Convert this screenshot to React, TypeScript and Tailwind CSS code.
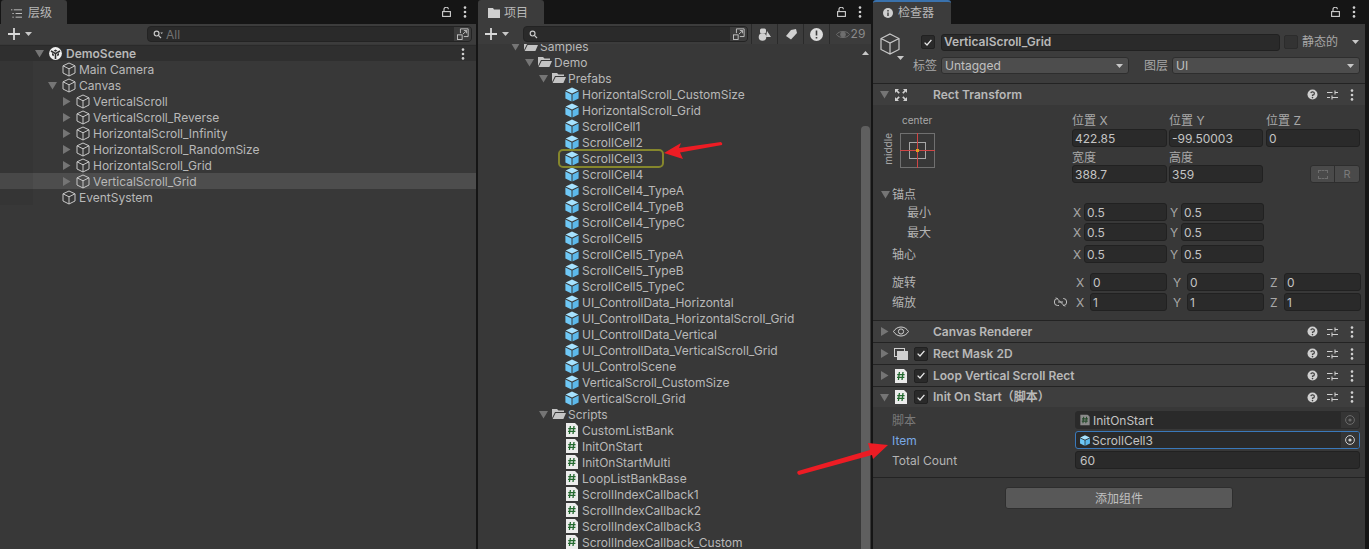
import type { ReactNode } from "react";

const font = "font-['Inter','Noto_Sans_CJK_SC',sans-serif]";

function Cube({ className = "" }: { className?: string }) {
  return (
    <svg viewBox="0 0 14 15" className={`h-[15px] w-[14px] shrink-0 ${className}`} fill="none" stroke="#c8c8c8" strokeWidth="1">
      <path d="M7 1 L13 3.8 V11 L7 14 L1 11 V3.8 Z" />
      <path d="M1 3.8 L7 6.8 L13 3.8 M7 6.8 V14" />
    </svg>
  );
}

function Prefab({ className = "" }: { className?: string }) {
  return (
    <svg viewBox="0 0 14 15" className={`h-[15px] w-[14px] shrink-0 ${className}`}>
      <path d="M7 .6 L13.4 3.6 L7 6.6 L.6 3.6 Z" fill="#a6e2ff" />
      <path d="M.4 4.6 L6.5 7.6 V14.6 L.4 11.5 Z" fill="#6fc8f6" />
      <path d="M13.6 4.6 L7.5 7.6 V14.6 L13.6 11.5 Z" fill="#5cb8ea" />
    </svg>
  );
}

function Script({ className = "" }: { className?: string }) {
  return (
    <svg viewBox="0 0 12 14" className={`h-[14px] w-[12px] shrink-0 ${className}`}>
      <path d="M0 0 H9 L12 3 V14 H0 Z" fill="#ececec" />
      <path d="M4.4 3 L3.4 11 M8 3 L7 11 M2.2 5.6 H9.6 M2 8.4 H9.4" stroke="#23692f" strokeWidth="1.3" fill="none" />
    </svg>
  );
}

function Folder() {
  return (
    <svg viewBox="0 0 14 12" className="h-[12px] w-[14px] shrink-0" fill="#c4c4c4">
      <path d="M0 1 H5 L6.5 2.5 H12 V4 H3 L0 10 Z" />
      <path d="M3.6 5 H14 L11.4 11 H.6 Z" />
    </svg>
  );
}

function Tri({ dir }: { dir: "down" | "right" }) {
  return (
    <svg viewBox="0 0 9 9" className="h-[9px] w-[9px] shrink-0">
      {dir === "down" ? <path d="M0 1 H9 L4.5 8.5 Z" fill="#757575" /> : <path d="M1 0 L8.5 4.5 L1 9 Z" fill="#757575" />}
    </svg>
  );
}

function Dots({ className = "" }: { className?: string }) {
  return (
    <svg viewBox="0 0 4 12" className={`h-[12px] w-[4px] shrink-0 ${className}`} fill="#d0d0d0">
      <circle cx="2" cy="1.6" r="1.3" />
      <circle cx="2" cy="6" r="1.3" />
      <circle cx="2" cy="10.4" r="1.3" />
    </svg>
  );
}

function Lock() {
  return (
    <svg viewBox="0 0 9 10" className="h-[10px] w-[9px] shrink-0" fill="none" stroke="#d0d0d0" strokeWidth="1.1">
      <path d="M2 4 V2.4 A2.2 2 0 0 1 6.4 2.2" />
      <rect x="0.6" y="4.6" width="7.8" height="4.8" />
    </svg>
  );
}

function Caret() {
  return (
    <svg viewBox="0 0 7 4" className="h-[4px] w-[7px] shrink-0">
      <path d="M0 0 H7 L3.5 4 Z" fill="#c8c8c8" />
    </svg>
  );
}

function Plus() {
  return (
    <div className="flex items-center gap-[5px]">
      <svg viewBox="0 0 12 12" className="h-[12px] w-[12px]" stroke="#d8d8d8" strokeWidth="1.8">
        <path d="M6 0 V12 M0 6 H12" />
      </svg>
      <Caret />
    </div>
  );
}

function Search({ filter = false }: { filter?: boolean }) {
  return (
    <svg viewBox="0 0 10 9" className="h-[9px] w-[10px] shrink-0" fill="none" stroke="#c8c8c8" strokeWidth="1.2">
      <circle cx="3.6" cy="3.6" r="2.4" />
      <path d="M5.4 5.4 L8 8" />
      {filter && <path d="M7.4 2.5 H10 L8.7 4 Z" fill="#c8c8c8" stroke="none" />}
    </svg>
  );
}

function SearchScene() {
  return (
    <svg viewBox="0 0 14 14" className="h-[12px] w-[12px]" fill="none" stroke="#d0d0d0" strokeWidth="1">
      <rect x="0.5" y="8" width="5.5" height="5.5" />
      <path d="M4 6 V1 H13 V10 H8 M7 7 L11 3.4 M8 3 H11.2 V6.2" />
    </svg>
  );
}

function Tab({ icon, label, className }: { icon: ReactNode; label: string; className: string }) {
  return (
    <div className={`flex h-[24px] items-center rounded-t-[3px] bg-[#3c3c3c] pl-[10px] text-[12px] text-[#b8b8b8] ${className}`}>
      {icon}
      <span>{label}</span>
    </div>
  );
}

function TabBar({ children }: { children: ReactNode }) {
  return (
    <div className="flex h-[24px] shrink-0 items-center justify-between bg-[#151515] pr-[9px]">
      {children}
      <div className="flex items-center gap-[12px]">
        <Lock />
        <Dots />
      </div>
    </div>
  );
}

function HierarchyRow({ indent, arrow, label, selected = false }: { indent: string; arrow?: "down" | "right"; label: string; selected?: boolean }) {
  return (
    <div className={`flex h-[16px] items-center ${selected ? "bg-[#4d4d4d]" : ""}`}>
      <div className={`h-full w-[33px] shrink-0 ${selected ? "bg-[#484848]" : "bg-[#353535]"}`} />
      <div className={`flex items-center ${indent}`}>
        <div className="flex w-[14px] items-center">{arrow && <Tri dir={arrow} />}</div>
        <Cube />
        <span className="ml-[3px] pt-[2px] text-[12px] text-[#b8b8b8]">{label}</span>
      </div>
    </div>
  );
}

const hierarchyChildren = [
  "VerticalScroll",
  "VerticalScroll_Reverse",
  "HorizontalScroll_Infinity",
  "HorizontalScroll_RandomSize",
  "HorizontalScroll_Grid",
];

function HierarchyPanel() {
  return (
    <div className="flex h-full w-[476px] shrink-0 flex-col bg-[#383838]">
      <TabBar>
        <Tab
          className="ml-[1px] w-[66px] gap-[6px] pt-[2px]"
          label="层级"
          icon={
            <svg viewBox="0 0 12 9" className="h-[9px] w-[11px]" stroke="#c8c8c8" strokeWidth="1">
              <path d="M3 .5 H12 M5 4.5 H12 M5 8.5 H12" />
              <path d="M0 .5 H1.5 M1.5 4.5 H3 M1.5 8.5 H3" />
            </svg>
          }
        />
      </TabBar>
      <div className="flex h-[20px] shrink-0 items-center bg-[#3c3c3c] pl-[8px] pr-[4px]">
        <Plus />
        <div className="ml-[115px] flex h-[16px] flex-1 items-center overflow-hidden rounded-[4px] border border-[#232323] bg-[#2a2a2a] pl-[5px]">
          <Search filter />
          <span className="ml-[3px] flex-1 pt-[2px] text-[12px] text-[#727272]">All</span>
          <div className="flex h-full w-[17px] items-center justify-center bg-[#3c3c3c]">
            <SearchScene />
          </div>
        </div>
      </div>
      <div className="mt-[1px] flex h-[16px] shrink-0 items-center border-t border-[#2a2a2a] bg-[#2f2f2f] pl-[35px] pr-[11px]">
        <Tri dir="down" />
        <svg viewBox="0 0 13 13" className="ml-[5px] h-[13px] w-[13px]">
          <circle cx="6.5" cy="6.5" r="6.4" fill="#f0f0f0" />
          <path d="M6.5 6.6 L2 4 M6.5 6.6 L11 4 M6.5 6.6 V12" stroke="#2f2f2f" strokeWidth="1.6" fill="none" />
          <path d="M6.5 2.6 L4.6 3.7 L6.5 4.8 L8.4 3.7 Z M3 6 V8.2 L4.8 9.2 V7 Z M10 6 V8.2 L8.2 9.2 V7 Z" fill="#2f2f2f" />
        </svg>
        <span className="ml-[4px] flex-1 text-[12px] font-semibold text-[#b8b8b8]">DemoScene</span>
        <Dots />
      </div>
      <div className="flex-1 bg-[#383838]">
        <HierarchyRow indent="pl-[15px]" label="Main Camera" />
        <HierarchyRow indent="pl-[15px]" arrow="down" label="Canvas" />
        {hierarchyChildren.map((label) => (
          <HierarchyRow key={label} indent="pl-[29px]" arrow="right" label={label} />
        ))}
        <HierarchyRow indent="pl-[29px]" arrow="right" label="VerticalScroll_Grid" selected />
        <HierarchyRow indent="pl-[15px]" label="EventSystem" />
      </div>
    </div>
  );
}

const prefabs = [
  "HorizontalScroll_CustomSize",
  "HorizontalScroll_Grid",
  "ScrollCell1",
  "ScrollCell2",
  "ScrollCell3",
  "ScrollCell4",
  "ScrollCell4_TypeA",
  "ScrollCell4_TypeB",
  "ScrollCell4_TypeC",
  "ScrollCell5",
  "ScrollCell5_TypeA",
  "ScrollCell5_TypeB",
  "ScrollCell5_TypeC",
  "UI_ControllData_Horizontal",
  "UI_ControllData_HorizontalScroll_Grid",
  "UI_ControllData_Vertical",
  "UI_ControllData_VerticalScroll_Grid",
  "UI_ControlScene",
  "VerticalScroll_CustomSize",
  "VerticalScroll_Grid",
];

const scripts = [
  "CustomListBank",
  "InitOnStart",
  "InitOnStartMulti",
  "LoopListBankBase",
  "ScrollIndexCallback1",
  "ScrollIndexCallback2",
  "ScrollIndexCallback3",
  "ScrollIndexCallback_Custom",
];

function FolderRow({ indent, label }: { indent: string; label: string }) {
  return (
    <div className={`flex h-[16px] items-center ${indent}`}>
      <Tri dir="down" />
      <span className="ml-[4px]">
        <Folder />
      </span>
      <span className="ml-[2px] pt-[2px] text-[12px] text-[#b8b8b8]">{label}</span>
    </div>
  );
}

function ProjectPanel() {
  return (
    <div className="flex h-full w-[393px] shrink-0 flex-col bg-[#383838]">
      <TabBar>
        <Tab
          className="w-[66px] gap-[4px] pt-[2px]"
          label="项目"
          icon={
            <svg viewBox="0 0 12 10" className="h-[10px] w-[12px]" fill="#d0d0d0">
              <path d="M0 0 H5 L6 1.5 H12 V10 H0 Z" />
            </svg>
          }
        />
      </TabBar>
      <div className="flex h-[20px] shrink-0 items-center bg-[#3c3c3c] pl-[7px]">
        <Plus />
        <div className="ml-[14px] flex h-[16px] w-[225px] items-center overflow-hidden rounded-[4px] border border-[#232323] bg-[#2a2a2a] pl-[5px]">
          <Search />
          <div className="flex-1" />
          <div className="flex h-full w-[17px] items-center justify-center bg-[#3c3c3c]">
            <SearchScene />
          </div>
        </div>
        <div className="ml-[3px] flex h-full w-[26px] items-center justify-center border-l border-[#2a2a2a]">
          <svg viewBox="0 0 13 13" className="h-[13px] w-[13px]" fill="#d0d0d0">
            <circle cx="4.5" cy="9" r="3.8" />
            <rect x="2" y="0.5" width="6" height="5" rx="1.5" />
            <path d="M9 3 L13 9 H8 Z" />
          </svg>
        </div>
        <div className="flex h-full w-[26px] items-center justify-center border-l border-[#2a2a2a]">
          <svg viewBox="0 0 12 11" className="h-[11px] w-[12px]" fill="#d0d0d0">
            <path d="M6 1 L11 0 L12 4 L6 10.5 L1 7 Z" />
          </svg>
        </div>
        <div className="flex h-full w-[26px] items-center justify-center border-l border-[#2a2a2a]">
          <svg viewBox="0 0 13 13" className="h-[13px] w-[13px]">
            <circle cx="6.5" cy="6.5" r="6.5" fill="#dcdcdc" />
            <path d="M6.5 2.5 V7.5 M6.5 9 V10.6" stroke="#3c3c3c" strokeWidth="1.6" />
          </svg>
        </div>
        <div className="flex h-full flex-1 items-center justify-center gap-[1px] border-l border-[#2a2a2a] text-[12px] text-[#8a8a8a]">
          <svg viewBox="0 0 14 9" className="h-[9px] w-[14px]" fill="none" stroke="#6e6e6e">
            <path d="M.5 4.5 C3 .5 11 .5 13.5 4.5 C11 8.5 3 8.5 .5 4.5 Z" />
            <circle cx="7" cy="4.5" r="2.4" fill="#6e6e6e" />
          </svg>
          <span>29</span>
        </div>
      </div>
      <div className="flex min-h-0 flex-1">
        <div className="min-w-0 flex-1 overflow-hidden">
          <div className="-mt-[6px]">
            <FolderRow indent="pl-[33px]" label="Samples" />
            <FolderRow indent="pl-[47px]" label="Demo" />
            <FolderRow indent="pl-[61px]" label="Prefabs" />
            {prefabs.map((label) => (
              <div key={label} className="flex h-[16px] items-center pl-[87px]">
                <Prefab />
                <span className="ml-[3px] pt-[2px] text-[12px] text-[#b8b8b8]">{label}</span>
              </div>
            ))}
            <FolderRow indent="pl-[61px]" label="Scripts" />
            {scripts.map((label) => (
              <div key={label} className="flex h-[16px] items-center pl-[88px]">
                <Script />
                <span className="ml-[4px] pt-[2px] text-[12px] text-[#b8b8b8]">{label}</span>
              </div>
            ))}
          </div>
        </div>
        <div className="flex w-[11px] shrink-0 flex-col items-center">
          <svg viewBox="0 0 7 4" className="mt-[7px] h-[4px] w-[7px]">
            <path d="M3.5 0 L7 4 H0 Z" fill="#c8c8c8" />
          </svg>
          <div className="mt-[71px] w-[9px] flex-1 rounded-t-[4px] bg-[#5f5f5f]" />
        </div>
      </div>
    </div>
  );
}

function Input({ className = "", children }: { className?: string; children?: ReactNode }) {
  return (
    <div className={`flex h-[18px] items-center overflow-hidden rounded-[3px] border bg-[#2a2a2a] text-[12px] text-[#c4c4c4] ${className}`}>
      {children}
    </div>
  );
}

function Cell({ value, className }: { value: string; className: string }) {
  return (
    <Input className={`border-[#212121] ${className}`}>
      <span className="pt-[2px]">{value}</span>
    </Input>
  );
}

function Labeled({ axis, value, labelW, fieldW }: { axis: string; value: string; labelW: string; fieldW: string }) {
  return (
    <div className="flex items-center">
      <span className={`pt-[2px] text-[12px] text-[#a8a8a8] ${labelW}`}>{axis}</span>
      <Cell value={value} className={`pl-[2px] ${fieldW}`} />
    </div>
  );
}

function Anchor({ label, axis, indent, className = "" }: { label: string; axis: [string, string]; indent: string; className?: string }) {
  return (
    <div className={`flex h-[18px] items-center ${className}`}>
      <span className={`w-[200px] pt-[2px] text-[12px] text-[#b4b4b4] ${indent}`}>{label}</span>
      <div className="flex gap-[3px]">
        <Labeled axis="X" value={axis[0]} labelW="w-[11px]" fieldW="w-[83px]" />
        <Labeled axis="Y" value={axis[1]} labelW="w-[11px]" fieldW="w-[83px]" />
      </div>
    </div>
  );
}

function Triple({ label, values, link = false, className = "" }: { label: string; values: [string, string, string]; link?: boolean; className?: string }) {
  return (
    <div className={`flex h-[18px] items-center ${className}`}>
      <span className="w-[180px] pl-[19px] pt-[2px] text-[12px] text-[#b4b4b4]">{label}</span>
      <div className="flex w-[23px] items-center pl-[1px]">
        {link && (
          <svg viewBox="0 0 13 10" className="h-[10px] w-[13px]" fill="none" stroke="#c0c0c0">
            <path d="M4 1.5 H3.5 A3 3.3 0 0 0 3.5 8.5 H5 M9 1.5 H9.5 A3 3.3 0 0 1 9.5 8.5 H9 M4 5 H9 M2 0.5 L11 9.5" />
          </svg>
        )}
      </div>
      <div className="flex gap-[6px]">
        {(["X", "Y", "Z"] as const).map((axis, i) => (
          <Labeled key={axis} axis={axis} value={values[i]} labelW="w-[14px]" fieldW="w-[77px]" />
        ))}
      </div>
    </div>
  );
}

function HeaderActions() {
  return (
    <div className="ml-auto flex items-center gap-[9px] pr-[11px]">
      <svg viewBox="0 0 11 11" className="h-[11px] w-[11px]">
        <circle cx="5.5" cy="5.5" r="5" fill="#d0d0d0" />
        <path d="M3.8 4.2 A1.8 1.7 0 1 1 5.5 6.2 V7" stroke="#3e3e3e" strokeWidth="1.2" fill="none" />
        <circle cx="5.5" cy="8.6" r="0.8" fill="#3e3e3e" />
      </svg>
      <svg viewBox="0 0 11 10" className="h-[10px] w-[11px]" stroke="#d0d0d0" strokeWidth="1.1" fill="none">
        <path d="M0 2.5 H5.5 M8 .5 V4.5 M8 2.5 H11 M0 7.5 H3 M5 5.5 V9.5 M5 7.5 H11" />
      </svg>
      <Dots className="ml-[3px]" />
    </div>
  );
}

function Check() {
  return (
    <div className="flex h-[14px] w-[14px] shrink-0 items-center justify-center rounded-[2px] border border-[#212121] bg-[#2a2a2a]">
      <svg viewBox="0 0 8 7" className="h-[7px] w-[8px]" fill="none" stroke="#e8e8e8" strokeWidth="1.3">
        <path d="M.6 3.6 L3 6 L7.4 .8" />
      </svg>
    </div>
  );
}

function Component({ open = false, icon, check = false, title, last = false }: { open?: boolean; icon: ReactNode; check?: boolean; title: string; last?: boolean }) {
  return (
    <div className={`flex shrink-0 items-center border-t border-[#232323] bg-[#3e3e3e] pl-[7px] ${last ? "h-[21px]" : "h-[22px]"}`}>
      <Tri dir={open ? "down" : "right"} />
      <div className="ml-[4px] flex w-[16px] justify-center">{icon}</div>
      <div className="ml-[3px] flex w-[16px] items-center justify-end">{check && <Check />}</div>
      <span className="ml-[5px] text-[12px] font-semibold text-[#b8b8b8]">{title}</span>
      <HeaderActions />
    </div>
  );
}

function Dropdown({ label, className = "" }: { label: string; className?: string }) {
  return (
    <div className={`flex h-[17px] items-center justify-between rounded-[3px] border border-[#2e2e2e] bg-[#4d4d4d] pl-[3px] pr-[5px] text-[12px] text-[#c0c0c0] ${className}`}>
      <span>{label}</span>
      <Caret />
    </div>
  );
}

function PickerEnd({ dim = false }: { dim?: boolean }) {
  return (
    <div className="ml-auto flex h-full w-[18px] items-center justify-center bg-[#353535]">
      <svg viewBox="0 0 10 10" className="h-[10px] w-[10px]" fill="none" stroke={dim ? "#6a6a6a" : "#d0d0d0"}>
        <circle cx="5" cy="5" r="4.4" />
        <circle cx="5" cy="5" r="1.6" fill={dim ? "#6a6a6a" : "#d0d0d0"} stroke="none" />
      </svg>
    </div>
  );
}

function InspectorPanel() {
  return (
    <div className="flex h-full w-[492px] shrink-0 flex-col bg-[#383838]">
      <TabBar>
        <Tab
          className="w-[78px] gap-[5px] border-t-2 border-[#3a72ad]"
          label="检查器"
          icon={
            <svg viewBox="0 0 10 10" className="h-[10px] w-[10px]">
              <circle cx="5" cy="5" r="5" fill="#d0d0d0" />
              <path d="M5 2 V3.4 M5 4.4 V8" stroke="#3c3c3c" strokeWidth="1.4" />
            </svg>
          }
        />
      </TabBar>
      <div className="relative flex h-[59px] shrink-0 flex-col bg-[#3c3c3c]">
        <div className="mt-[9px] flex h-[18px] items-center pl-[48px]">
          <Check />
          <div className="ml-[6px] flex h-[17px] w-[339px] items-center rounded-[3px] border border-[#212121] bg-[#2a2a2a] pl-[2px] text-[12px] font-semibold text-[#b8b8b8]">
            VerticalScroll_Grid
          </div>
          <div className="ml-[4px] h-[14px] w-[14px] rounded-[2px] border border-[#2c2c2c] bg-[#333333]" />
          <span className="ml-[4px] text-[12px] text-[#a8a8a8]">静态的</span>
          <span className="ml-[14px]">
            <Caret />
          </span>
        </div>
        <div className="mt-[6px] flex h-[17px] items-center pl-[40px]">
          <span className="w-[28px] text-[12px] text-[#a8a8a8]">标签</span>
          <Dropdown label="Untagged" className="w-[188px]" />
          <span className="ml-[15px] w-[28px] text-[12px] text-[#a8a8a8]">图层</span>
          <Dropdown label="UI" className="w-[188px]" />
        </div>
        <svg viewBox="0 0 20 23" className="absolute left-[7px] top-[9px] h-[23px] w-[20px]" fill="none" stroke="#c8c8c8" strokeWidth="1.2">
          <path d="M10 1 L19 5.5 V16.5 L10 21 L1 16.5 V5.5 Z M1 5.5 L10 10 L19 5.5 M10 10 V21" />
        </svg>
        <svg viewBox="0 0 7 4" className="absolute left-[24px] top-[32px] h-[4px] w-[7px]">
          <path d="M0 0 H7 L3.5 4 Z" fill="#c8c8c8" />
        </svg>
      </div>

      <Component
        open
        title="Rect Transform"
        icon={
          <svg viewBox="0 0 12 12" className="h-[12px] w-[12px]" fill="#d0d0d0">
            <path d="M0 0 H4 L2.6 1.4 L4.8 3.6 L3.6 4.8 L1.4 2.6 L0 4 Z M12 0 V4 L10.6 2.6 L8.4 4.8 L7.2 3.6 L9.4 1.4 L8 0 Z M0 12 V8 L1.4 9.4 L3.6 7.2 L4.8 8.4 L2.6 10.6 L4 12 Z M12 12 H8 L9.4 10.6 L7.2 8.4 L8.4 7.2 L10.6 9.4 L12 8 Z" />
          </svg>
        }
      />

      <div className="flex h-[78px] shrink-0 pt-[7px]">
        <div className="flex w-[199px] shrink-0 flex-col pl-[29px]">
          <span className="h-[16px] text-[10px] leading-[16px] text-[#a8a8a8]">center</span>
          <div className="mt-[5px] flex items-start -ml-[20px]">
            <span className="w-[13px] rotate-180 text-[10px] leading-[13px] text-[#a8a8a8] [writing-mode:vertical-rl]">middle</span>
            <svg viewBox="0 0 35 35" className="ml-[5px] h-[35px] w-[35px]" fill="none">
              <rect x=".5" y=".5" width="34" height="34" stroke="#707070" />
              <rect x="9.5" y="9.5" width="16" height="16" stroke="#a8a8a8" />
              <path d="M17.5 0 V35 M0 17.5 H35" stroke="#d04545" />
              <rect x="16" y="16" width="3" height="3" fill="#e0a020" />
            </svg>
          </div>
        </div>
        <div className="flex flex-col">
          <div className="grid h-[17px] grid-cols-[97px_97px_95px] items-center text-[12px] text-[#a8a8a8]">
            <span>位置 X</span>
            <span>位置 Y</span>
            <span>位置 Z</span>
          </div>
          <div className="grid grid-cols-[97px_97px_95px]">
            <Cell value="422.85" className="w-[95px] pl-[2px]" />
            <Cell value="-99.50003" className="w-[94px] pl-[2px]" />
            <Cell value="0" className="w-[94px] pl-[2px]" />
          </div>
          <div className="grid h-[18px] grid-cols-[97px_97px_95px] items-center pt-[2px] text-[12px] text-[#a8a8a8]">
            <span>宽度</span>
            <span>高度</span>
          </div>
          <div className="flex">
            <Cell value="388.7" className="w-[95px] pl-[2px]" />
            <Cell value="359" className="ml-[2px] w-[94px] pl-[2px]" />
            <div className="ml-[47px] flex h-[18px] w-[50px] overflow-hidden rounded-[3px] border border-[#2e2e2e] bg-[#4a4a4a]">
              <div className="flex w-[24px] items-center justify-center border-r border-[#2e2e2e]">
                <div className="h-[9px] w-[10px] border border-dashed border-[#6e6e6e]" />
              </div>
              <div className="flex flex-1 items-center justify-center text-[11px] text-[#7a7a7a]">R</div>
            </div>
          </div>
        </div>
      </div>

      <div className="mt-[3px] flex h-[16px] shrink-0 items-center pl-[8px]">
        <Tri dir="down" />
        <span className="ml-[2px] pt-[2px] text-[12px] text-[#b4b4b4]">锚点</span>
      </div>
      <Anchor label="最小" indent="pl-[34px]" axis={["0.5", "0.5"]} className="mt-[1px] shrink-0" />
      <Anchor label="最大" indent="pl-[34px]" axis={["0.5", "0.5"]} className="mt-[2px] shrink-0" />
      <Anchor label="轴心" indent="pl-[19px]" axis={["0.5", "0.5"]} className="mt-[4px] shrink-0" />
      <Triple label="旋转" values={["0", "0", "0"]} className="mt-[10px] shrink-0" />
      <Triple label="缩放" values={["1", "1", "1"]} link className="mt-[2px] shrink-0" />

      <div className="mt-[9px] flex shrink-0 flex-col">
        <Component
          title="Canvas Renderer"
          icon={
            <svg viewBox="0 0 16 11" className="h-[11px] w-[16px]" fill="none" stroke="#d0d0d0">
              <path d="M.5 5.5 C4 -.5 12 -.5 15.5 5.5 C12 11.5 4 11.5 .5 5.5 Z" />
              <circle cx="8" cy="5.5" r="2.6" />
            </svg>
          }
        />
        <Component
          check
          title="Rect Mask 2D"
          icon={
            <svg viewBox="0 0 14 12" className="h-[12px] w-[14px]" fill="none" stroke="#d0d0d0">
              <rect x=".5" y=".5" width="10" height="8" />
              <rect x="3.5" y="3.5" width="10" height="8" fill="#d0d0d0" />
            </svg>
          }
        />
        <Component check title="Loop Vertical Scroll Rect" icon={<Script />} />
        <Component open check title="Init On Start（脚本）" icon={<Script />} last />
      </div>

      <div className="flex shrink-0 flex-col gap-[2px] pt-[4px]">
        <div className="flex h-[18px] items-center">
          <span className="w-[202px] pl-[19px] pt-[2px] text-[12px] text-[#7a7a7a]">脚本</span>
          <Input className="w-[285px] border-[#2a2a2a] pl-[3px] text-[#707070]">
            <Script className="scale-[.8] opacity-50" />
            <span className="ml-[2px] pt-[2px]">InitOnStart</span>
            <PickerEnd dim />
          </Input>
        </div>
        <div className="flex h-[18px] items-center">
          <span className="w-[202px] pl-[19px] pt-[2px] text-[12px] text-[#79a8e6]">Item</span>
          <Input className="w-[285px] border-[#3a79bb] pl-[2px]">
            <Prefab className="scale-75" />
            <span className="pt-[2px]">ScrollCell3</span>
            <PickerEnd />
          </Input>
        </div>
        <div className="flex h-[18px] items-center">
          <span className="w-[202px] pl-[19px] pt-[2px] text-[12px] text-[#b4b4b4]">Total Count</span>
          <Cell value="60" className="w-[285px] pl-[4px]" />
        </div>
      </div>

      <div className="mt-[8px] flex shrink-0 justify-center border-t border-[#232323] pt-[9px]">
        <div className="flex h-[22px] w-[228px] items-center justify-center rounded-[3px] border border-[#2e2e2e] bg-[#585858] pt-[2px] text-[12px] text-[#c0c0c0]">
          添加组件
        </div>
      </div>
    </div>
  );
}

export default function App() {
  return (
    <div className={`relative flex h-[549px] w-[1369px] gap-[2px] overflow-hidden bg-[#151515] ${font}`}>
      <HierarchyPanel />
      <ProjectPanel />
      <InspectorPanel />

      {/* red annotation arrows and prefab highlight on top of the shot */}
      <div className="absolute left-[558px] top-[149px] h-[19px] w-[106px] rounded-[5px] border-2 border-[#85862c]" />
      <svg className="pointer-events-none absolute left-0 top-0 h-[549px] w-[1369px]" viewBox="0 0 1369 549">
        <path d="M721 142 Q723 143.5 722 145 L680 152.5 L683 159 L664 153 L681 143 L679 148 Z" fill="#ed1c24" />
        <path d="M798 471 L870 450 L868 443 L888 445 L873 459 L872 455 L799 475 Q796 473 798 471 Z" fill="#ed1c24" />
      </svg>
    </div>
  );
}
